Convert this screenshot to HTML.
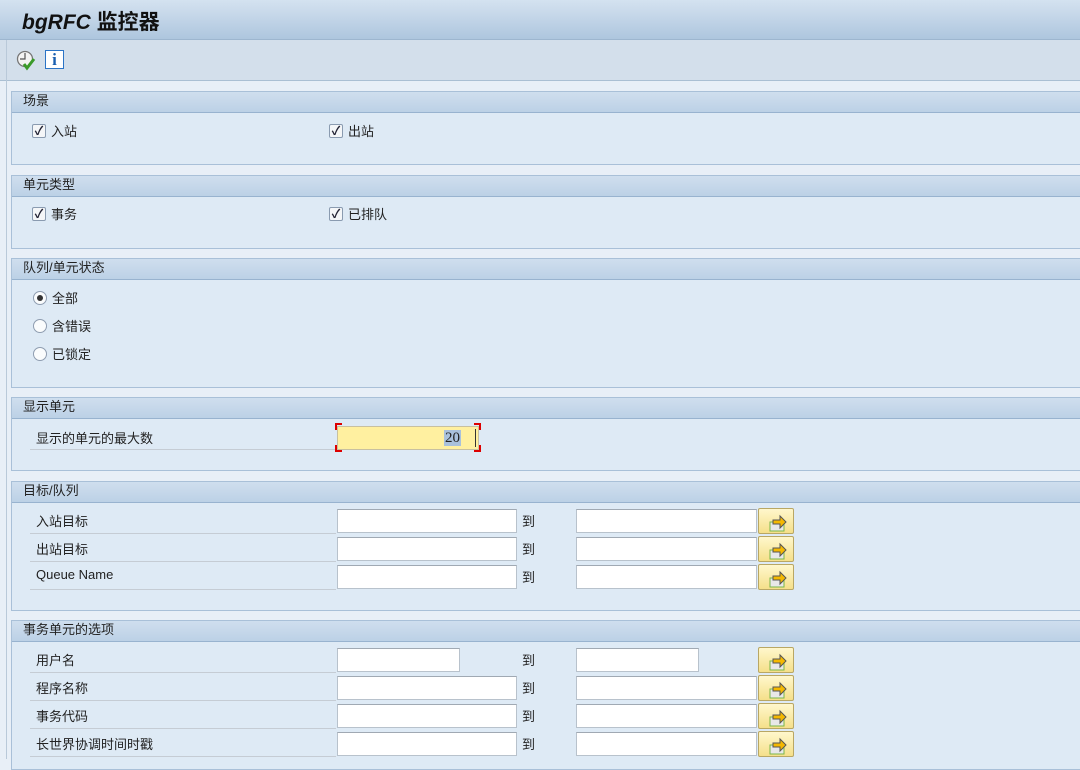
<!DOCTYPE html>
<html><head><meta charset="utf-8"><style>
*{margin:0;padding:0;box-sizing:border-box}
body{width:1080px;height:759px;overflow:hidden;background:#e8eff7;font-family:"Liberation Sans","Noto Sans CJK SC",sans-serif;font-size:13px;color:#222;position:relative}
.a{position:absolute}
.title{left:0;top:0;width:1080px;height:40px;background:linear-gradient(#d4e2f0,#aec6de);border-bottom:1px solid #9db6cf}
.title span{position:absolute;left:22px;top:6px;font-size:21px;font-weight:bold;font-style:italic;color:#111}
.tb{left:0;top:40px;width:1080px;height:41px;background:#d3dfeb;border-bottom:1px solid #aabfd3}
.lb{left:6px;top:40px;width:1px;height:719px;background:#b9c9d9}
.g{left:11px;width:1075px;border:1px solid #a9c0d8;background:#deeaf5}
.gh{height:21px;background:linear-gradient(#cfdeee,#bcd1e6);border-bottom:1px solid #98b3cf;padding:0 0 0 11px;font-size:13px;line-height:18px}
.cb{width:14px;height:14px;border:1px solid #8a9bb0;background:#f4f6f8;border-radius:2px;font-size:12px;line-height:12px;text-align:center;font-weight:bold;color:#223}
.rd{width:14px;height:14px;border:1px solid #8f9db0;border-radius:50%;background:#fafcfd}
.rd.on::after{content:"";position:absolute;left:3px;top:3px;width:6px;height:6px;border-radius:50%;background:#333}
.t{font-size:13px;white-space:nowrap;margin-top:-2px}
.in{height:24px;background:#fff;border:1px solid #b8c2cc;border-top-color:#a0a9b3}
.ln{height:1px;background:#c5ccd4;left:30px;width:306px}
.bt{width:36px;height:26px;border:1px solid #b9a764;border-radius:2px;background:linear-gradient(#fff7cc,#f5e08a)}
</style></head><body>
<div class="a title"><span>bgRFC <span style="position:static;font-style:normal;font-weight:bold;font-family:'Noto Sans CJK SC',sans-serif">监控器</span></span></div>
<div class="a tb">
<svg class="a" style="left:16px;top:10px" width="22" height="22" viewBox="0 0 22 22"><circle cx="9" cy="9" r="7.5" fill="#f4f4f4" stroke="#777" stroke-width="1.3"/><path d="M9 3v6h-5" stroke="#555" stroke-width="1.2" fill="none"/><path d="M8 14l3 4 7-9" stroke="#3a9a2a" stroke-width="3" fill="none"/></svg>
<div class="a" style="left:45px;top:10px;width:19px;height:19px;border:1px solid #2b74c6;background:#fff;color:#1a5fb0;font-family:'Liberation Serif',serif;font-weight:bold;font-size:17px;text-align:center;line-height:18px">i</div>
</div>
<div class="a lb"></div>

<div class="a g" style="top:91px;height:74px"><div class="gh">场景</div></div>
<div class="a cb" style="left:32px;top:124px">✓</div><div class="a t" style="left:51px;top:123px">入站</div>
<div class="a cb" style="left:329px;top:124px">✓</div><div class="a t" style="left:348px;top:123px">出站</div>

<div class="a g" style="top:175px;height:74px"><div class="gh">单元类型</div></div>
<div class="a cb" style="left:32px;top:207px">✓</div><div class="a t" style="left:51px;top:206px">事务</div>
<div class="a cb" style="left:329px;top:207px">✓</div><div class="a t" style="left:348px;top:206px">已排队</div>

<div class="a g" style="top:258px;height:130px"><div class="gh">队列/单元状态</div></div>
<div class="a rd on" style="left:33px;top:291px"></div><div class="a t" style="left:52px;top:290px">全部</div>
<div class="a rd" style="left:33px;top:319px"></div><div class="a t" style="left:52px;top:318px">含错误</div>
<div class="a rd" style="left:33px;top:347px"></div><div class="a t" style="left:52px;top:346px">已锁定</div>

<div class="a g" style="top:397px;height:74px"><div class="gh">显示单元</div></div>
<div class="a t" style="left:36px;top:430px">显示的单元的最大数</div>
<div class="a ln" style="top:449px"></div>
<div class="a" style="left:337px;top:426px;width:142px;height:24px;background:#fff0a0;border:1px solid #c8c0a0"></div>
<div class="a" style="left:444px;top:430px;background:#a9c1dc;font-size:15px;font-family:'Liberation Serif',serif;line-height:16px;padding:0 1px">20</div>
<div class="a" style="left:475px;top:429px;width:1px;height:18px;background:#333"></div>
<div class="a" style="left:335px;top:423px;width:7px;height:7px;border-left:2px solid #d00;border-top:2px solid #d00"></div>
<div class="a" style="left:474px;top:423px;width:7px;height:7px;border-right:2px solid #d00;border-top:2px solid #d00"></div>
<div class="a" style="left:335px;top:445px;width:7px;height:7px;border-left:2px solid #d00;border-bottom:2px solid #d00"></div>
<div class="a" style="left:474px;top:445px;width:7px;height:7px;border-right:2px solid #d00;border-bottom:2px solid #d00"></div>

<div class="a g" style="top:481px;height:130px"><div class="gh">目标/队列</div></div>
<div class="a g" style="top:620px;height:150px"><div class="gh">事务单元的选项</div></div>

<svg width="0" height="0" style="position:absolute"><defs><g id="ar"><rect x="11" y="13" width="14" height="9" fill="#e8e8e8" stroke="#7ab648" stroke-width="1"/><path d="M14 11h7v-4l6 6-6 6v-4h-7z" fill="#f5b800" stroke="#555" stroke-width="1"/></g></defs></svg>

<div class="a t" style="left:36px;top:513px">入站目标</div><div class="a ln" style="top:533px"></div>
<div class="a in" style="left:337px;top:509px;width:180px"></div><div class="a t" style="left:522px;top:513px">到</div>
<div class="a in" style="left:576px;top:509px;width:181px"></div><div class="a bt" style="left:758px;top:508px"><svg width="36" height="26"><use href="#ar"/></svg></div>

<div class="a t" style="left:36px;top:541px">出站目标</div><div class="a ln" style="top:561px"></div>
<div class="a in" style="left:337px;top:537px;width:180px"></div><div class="a t" style="left:522px;top:541px">到</div>
<div class="a in" style="left:576px;top:537px;width:181px"></div><div class="a bt" style="left:758px;top:536px"><svg width="36" height="26"><use href="#ar"/></svg></div>

<div class="a t" style="left:36px;top:569px">Queue Name</div><div class="a ln" style="top:589px"></div>
<div class="a in" style="left:337px;top:565px;width:180px"></div><div class="a t" style="left:522px;top:569px">到</div>
<div class="a in" style="left:576px;top:565px;width:181px"></div><div class="a bt" style="left:758px;top:564px"><svg width="36" height="26"><use href="#ar"/></svg></div>

<div class="a t" style="left:36px;top:652px">用户名</div><div class="a ln" style="top:672px"></div>
<div class="a in" style="left:337px;top:648px;width:123px"></div><div class="a t" style="left:522px;top:652px">到</div>
<div class="a in" style="left:576px;top:648px;width:123px"></div><div class="a bt" style="left:758px;top:647px"><svg width="36" height="26"><use href="#ar"/></svg></div>

<div class="a t" style="left:36px;top:680px">程序名称</div><div class="a ln" style="top:700px"></div>
<div class="a in" style="left:337px;top:676px;width:180px"></div><div class="a t" style="left:522px;top:680px">到</div>
<div class="a in" style="left:576px;top:676px;width:181px"></div><div class="a bt" style="left:758px;top:675px"><svg width="36" height="26"><use href="#ar"/></svg></div>

<div class="a t" style="left:36px;top:708px">事务代码</div><div class="a ln" style="top:728px"></div>
<div class="a in" style="left:337px;top:704px;width:180px"></div><div class="a t" style="left:522px;top:708px">到</div>
<div class="a in" style="left:576px;top:704px;width:181px"></div><div class="a bt" style="left:758px;top:703px"><svg width="36" height="26"><use href="#ar"/></svg></div>

<div class="a t" style="left:36px;top:736px">长世界协调时间时戳</div><div class="a ln" style="top:756px"></div>
<div class="a in" style="left:337px;top:732px;width:180px"></div><div class="a t" style="left:522px;top:736px">到</div>
<div class="a in" style="left:576px;top:732px;width:181px"></div><div class="a bt" style="left:758px;top:731px"><svg width="36" height="26"><use href="#ar"/></svg></div>
</body></html>
